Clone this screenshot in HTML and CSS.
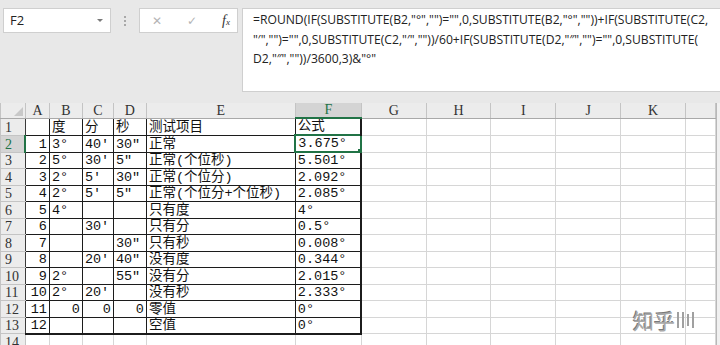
FILE: index.html
```html
<html>
<head>
  <link rel="stylesheet" href="styles.css">
</head>
<body>
  <div class="toolbar">
    <div class="namebox">F2<span class="caret"></span></div>
    <div class="grip"><span></span><span></span><span></span></div>
    <div class="fxbtns">
      <span class="btn x">&#x2715;</span>
      <span class="btn ok">&#x2713;</span>
      <span class="btn fx"><i>f</i><small>x</small></span>
    </div>
    <div class="formula">=ROUND(IF(SUBSTITUTE(B2,"°","")="",0,SUBSTITUTE(B2,"°",""))+IF(SUBSTITUTE(C2,<br>"′","")="",0,SUBSTITUTE(C2,"′",""))/60+IF(SUBSTITUTE(D2,"″","")="",0,SUBSTITUTE(<br>D2,"″",""))/3600,3)&amp;"°"</div>
  </div>

  <div class="sheet">
    <table class="grid">
      <colgroup>
        <col class="c-rh"><col class="c-a"><col class="c-b"><col class="c-c"><col class="c-d">
        <col class="c-e"><col class="c-f"><col class="c-g"><col class="c-g"><col class="c-g">
        <col class="c-g"><col class="c-g"><col class="c-l">
      </colgroup>
      <thead>
        <tr>
          <th class="corner"><span class="tri"></span></th>
          <th>A</th><th>B</th><th>C</th><th>D</th><th>E</th><th class="hl">F</th>
          <th>G</th><th>H</th><th>I</th><th>J</th><th>K</th><th></th>
        </tr>
      </thead>
      <tbody>
        <tr><th>1</th><td class="d"></td><td class="d">度</td><td class="d">分</td><td class="d">秒</td><td class="d">测试项目</td><td class="d f">公式</td><td></td><td></td><td></td><td></td><td></td><td></td></tr>
        <tr><th class="hl">2</th><td class="d n">1</td><td class="d">3°</td><td class="d">40′</td><td class="d">30″</td><td class="d">正常</td><td class="d f sel">3.675°</td><td></td><td></td><td></td><td></td><td></td><td></td></tr>
        <tr><th>3</th><td class="d n">2</td><td class="d">5°</td><td class="d">30′</td><td class="d">5″</td><td class="d">正常(个位秒)</td><td class="d f">5.501°</td><td></td><td></td><td></td><td></td><td></td><td></td></tr>
        <tr><th>4</th><td class="d n">3</td><td class="d">2°</td><td class="d">5′</td><td class="d">30″</td><td class="d">正常(个位分)</td><td class="d f">2.092°</td><td></td><td></td><td></td><td></td><td></td><td></td></tr>
        <tr><th>5</th><td class="d n">4</td><td class="d">2°</td><td class="d">5′</td><td class="d">5″</td><td class="d">正常(个位分+个位秒)</td><td class="d f">2.085°</td><td></td><td></td><td></td><td></td><td></td><td></td></tr>
        <tr><th>6</th><td class="d n">5</td><td class="d">4°</td><td class="d"></td><td class="d"></td><td class="d">只有度</td><td class="d f">4°</td><td></td><td></td><td></td><td></td><td></td><td></td></tr>
        <tr><th>7</th><td class="d n">6</td><td class="d"></td><td class="d">30′</td><td class="d"></td><td class="d">只有分</td><td class="d f">0.5°</td><td></td><td></td><td></td><td></td><td></td><td></td></tr>
        <tr><th>8</th><td class="d n">7</td><td class="d"></td><td class="d"></td><td class="d">30″</td><td class="d">只有秒</td><td class="d f">0.008°</td><td></td><td></td><td></td><td></td><td></td><td></td></tr>
        <tr><th>9</th><td class="d n">8</td><td class="d"></td><td class="d">20′</td><td class="d">40″</td><td class="d">没有度</td><td class="d f">0.344°</td><td></td><td></td><td></td><td></td><td></td><td></td></tr>
        <tr><th>10</th><td class="d n">9</td><td class="d">2°</td><td class="d"></td><td class="d">55″</td><td class="d">没有分</td><td class="d f">2.015°</td><td></td><td></td><td></td><td></td><td></td><td></td></tr>
        <tr><th>11</th><td class="d n">10</td><td class="d">2°</td><td class="d">20′</td><td class="d"></td><td class="d">没有秒</td><td class="d f">2.333°</td><td></td><td></td><td></td><td></td><td></td><td></td></tr>
        <tr><th>12</th><td class="d n">11</td><td class="d n">0</td><td class="d n">0</td><td class="d n">0</td><td class="d">零值</td><td class="d f">0°</td><td></td><td></td><td></td><td></td><td></td><td></td></tr>
        <tr class="last"><th>13</th><td class="d n">12</td><td class="d"></td><td class="d"></td><td class="d"></td><td class="d">空值</td><td class="d f">0°</td><td></td><td></td><td></td><td></td><td></td><td></td></tr>
        <tr class="empty"><th>14</th><td></td><td></td><td></td><td></td><td></td><td></td><td></td><td></td><td></td><td></td><td></td><td></td></tr>
      </tbody>
    </table>
    <div class="edge"></div>
    <div class="watermark">知乎<svg width="20" height="20" viewBox="0 0 20 20"><path d="M2 2v16M7 2v16M12 4v12M17 2v16" stroke="#a0a0a0" stroke-width="2" fill="none"/></svg></div>
  </div>
</body>
</html>
```

FILE: styles.css
```css
body {
  margin: 0;
  width: 720px;
  height: 345px;
  overflow: hidden;
  background-color: #e8e8e8;
  font-family: "Liberation Mono", "Noto Sans CJK SC", monospace;
}

/* formula bar */
.toolbar {
  display: flex;
  align-items: flex-start;
  height: 103px;
  padding: 8px 0 0 3px;
  box-sizing: border-box;
}

.namebox {
  position: relative;
  width: 108px;
  height: 25px;
  box-sizing: border-box;
  padding: 0 6px;
  background-color: #ffffff;
  border: 1px solid #cfcfcf;
  font-family: "Open Sans", sans-serif;
  font-size: 13px;
  line-height: 23px;
  color: #222222;
}

.caret {
  position: absolute;
  right: 7px;
  top: 10px;
  border-left: 3px solid transparent;
  border-right: 3px solid transparent;
  border-top: 3px solid #7a7a7a;
}

.grip {
  width: 28px;
  height: 25px;
  display: flex;
  flex-direction: column;
  align-items: center;
  justify-content: center;
  gap: 2px;
}

.grip span {
  width: 2px;
  height: 2px;
  background-color: #a8a8a8;
}

.fxbtns {
  width: 99px;
  height: 25px;
  box-sizing: border-box;
  margin-right: 4px;
  display: flex;
  align-items: center;
  justify-content: space-between;
  padding: 0 7px 0 12px;
  background-color: #ffffff;
  border: 1px solid #cfcfcf;
}

.btn {
  font-family: "DejaVu Sans", sans-serif;
  color: #b4b4b4;
  font-size: 12px;
}

.btn.fx {
  font-family: "Liberation Serif", serif;
  color: #333333;
  font-size: 14px;
}

.btn.fx small {
  font-size: 9px;
  font-style: italic;
}

.formula {
  flex: 1;
  height: 84px;
  box-sizing: border-box;
  padding: 1px 10px;
  background-color: #ffffff;
  border: 1px solid #cfcfcf;
  border-right: none;
  font-family: "Open Sans", sans-serif;
  font-size: 12.15px;
  line-height: 19.5px;
  color: #222222;
  white-space: nowrap;
}

/* sheet */
.sheet {
  position: relative;
  display: flex;
  background-color: #ffffff;
}

.grid {
  border-collapse: collapse;
  table-layout: fixed;
  font-size: 13.5px;
  color: #111111;
}

.c-rh { width: 25px; }
.c-a { width: 24px; }
.c-b { width: 33px; }
.c-c { width: 31px; }
.c-d { width: 33px; }
.c-e { width: 149px; }
.c-f { width: 66px; }
.c-g { width: 65px; }
.c-l { width: 30px; }

.grid td,
.grid th {
  padding: 0 2px;
  overflow: hidden;
  white-space: nowrap;
  vertical-align: bottom;
  line-height: 15px;
}

.grid td {
  border: 1px solid #d6d6d6;
  text-align: left;
}

.grid th {
  background-color: #ececec;
  border: 1px solid #c4c4c4;
  font-family: "Liberation Serif", serif;
  font-weight: normal;
  font-size: 14px;
  color: #333333;
}

.grid thead tr {
  height: 15px;
}

.grid thead th {
  border-top: none;
  border-bottom-color: #a9a9a9;
  text-align: center;
  line-height: 14px;
}

.grid tbody tr {
  height: 16.5px;
}

.grid tbody th {
  text-align: left;
  padding-left: 4px;
  border-right-color: #3a3a3a;
}

.grid tbody tr.empty th {
  border-right-color: #c4c4c4;
}

.grid th.hl {
  background-color: #d4d4d4;
  color: #217346;
}

.grid thead th.hl {
  border-bottom: 2px solid #217346;
}

.grid tbody th.hl {
  border-right: 2px solid #217346;
}

.corner {
  position: relative;
}

.tri {
  position: absolute;
  right: 2px;
  bottom: 2px;
  border-left: 9px solid transparent;
  border-bottom: 9px solid #c8c8c8;
}

.grid td.d {
  border-color: #1c1c1c;
}

.grid td.n {
  text-align: right;
}

.grid td.f {
  border-right: 2px solid #1c1c1c;
}

.grid tr.last td.d {
  border-bottom: 2px solid #1c1c1c;
}

.grid td.sel {
  position: relative;
  border: 2px solid #217346;
}

.grid td.sel::after {
  content: "";
  position: absolute;
  right: -4px;
  bottom: -4px;
  width: 5px;
  height: 5px;
  background-color: #217346;
  border: 1px solid #ffffff;
}

.edge {
  width: 3px;
  border-left: 1px solid #b8b8b8;
  background-color: #f0f0f0;
}

.watermark {
  position: absolute;
  left: 633px;
  top: 205px;
  display: flex;
  align-items: center;
  gap: 1px;
  font-family: "Noto Sans CJK SC", sans-serif;
  font-size: 21px;
  line-height: 24px;
  color: #a8a8a8;
  text-shadow: 1px 1px 0 #ffffff, -1px -1px 0 #7a7a7a;
}
```
